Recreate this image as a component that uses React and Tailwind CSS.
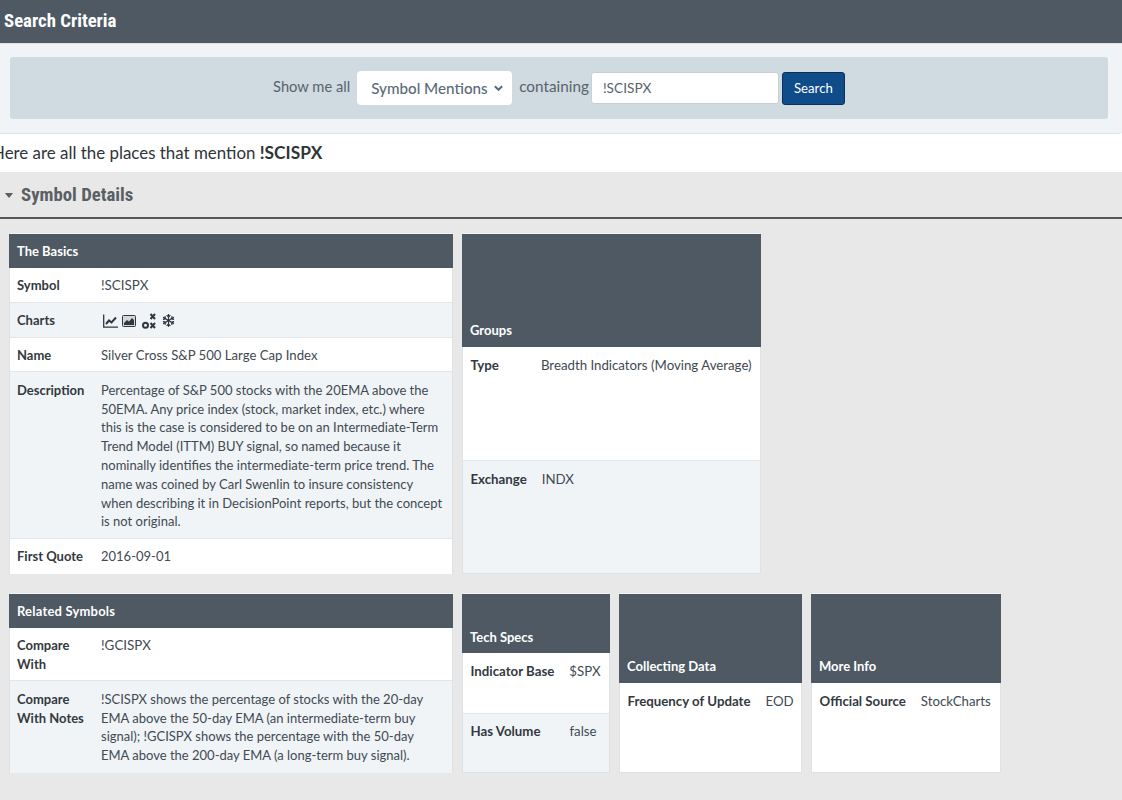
import { FaRegSnowflake } from "react-icons/fa";

const heading = "font-['Roboto_Condensed','Liberation_Sans_Narrow','Roboto',sans-serif] font-bold";

function LineIcon() {
  return (
    <svg viewBox="0 0 15 14" className="h-[14px] w-[15px]" fill="none" stroke="#2f3740">
      <path d="M0.7 0.5 V13.2 H15" strokeWidth="1.3" />
      <path d="M3 10 L6 6.5 L8.5 8.5 L13 3.5" strokeWidth="2" />
    </svg>
  );
}

function AreaIcon() {
  return (
    <svg viewBox="0 0 14 12" className="h-[12px] w-[14px]">
      <rect x="0.5" y="0.5" width="13" height="11" rx="1" fill="#d5d8db" stroke="#2f3740" />
      <path d="M2 10 V8 L5 5 L7 6.5 L10 3 L12 5 V10 Z" fill="#2f3740" />
    </svg>
  );
}

function PnfIcon() {
  return (
    <svg viewBox="0 0 14 16" className="h-[16px] w-[14px]" fill="none" stroke="#2f3740" strokeWidth="2">
      <path d="M8.5 1 L13 6 M13 1 L8.5 6 M8.5 10 L13 15 M13 10 L8.5 15" />
      <circle cx="3.5" cy="12.2" r="2.5" />
    </svg>
  );
}

function Row({ label, alt, children, last }) {
  return (
    <div className={`flex gap-[14px] pl-[7px] pr-[8px] pt-[8.5px] ${last ? "pb-[7.5px]" : "pb-[6.5px] border-b border-[#e2e6e9]"} ${alt ? "bg-[#f0f4f7]" : "bg-white"}`}>
      <div className="w-[70px] shrink-0 font-bold text-[#33393f]">{label}</div>
      <div className="min-w-0 text-[#414a52]">{children}</div>
    </div>
  );
}

function Card({ title, className = "", children, equal }) {
  return (
    <div className={`border border-[#dfe2e4] border-t-[#f4f4f4] ${equal ? "grid auto-rows-fr" : "flex flex-col"} ${className}`}>
      <div className={`-mx-px flex items-end bg-[#4e5964] px-[8px] pb-[7px] pt-[8px] font-bold text-white ${equal ? "min-h-0" : ""}`}>
        {title}
      </div>
      {children}
    </div>
  );
}

function EqRow({ label, value, alt, gap = "gap-[15px]" }) {
  return (
    <div className={`flex min-h-0 ${gap} px-[7.5px] pt-[8.5px] text-[13.25px] whitespace-nowrap ${alt ? "border-t border-[#e2e6e9] bg-[#f0f4f7]" : "bg-white"}`}>
      <div className="shrink-0 font-bold text-[#33393f]">{label}</div>
      <div className="text-[#414a52]">{value}</div>
    </div>
  );
}

export default function App() {
  return (
    <div className="h-[800px] w-[1122px] overflow-hidden bg-white font-['Lato',sans-serif] text-[13px] leading-[18.8px]">
      <header className={`flex h-[43px] items-center bg-[#4e5964] pl-[4px] text-[18.8px] text-white ${heading}`}>
        Search Criteria
      </header>
      <section className="rounded-br-[3px] border-y border-[#dfe3e7] bg-[#f0f4f7] pb-[14px] pl-[10px] pr-[14px] pt-[13px]">
        <form className="flex h-[62px] items-center justify-center rounded-[3px] bg-[#d0dae1] text-[#58636d]">
          <span className="-mt-[3px] text-[14.7px]">Show me all</span>
          <div className="ml-[7px] flex h-[34px] w-[155px] items-center gap-[6px] rounded-[4px] bg-white pl-[14px] text-[15.2px] font-medium text-[#5a6a7a]">
            Symbol Mentions
            <svg viewBox="0 0 10 6" className="h-[6px] w-[9px]" fill="none" stroke="#5a6a7a" strokeWidth="2.2"><path d="M1 1 L5 5 L9 1" /></svg>
          </div>
          <span className="-mt-[3px] ml-[7px] text-[15.3px]">containing</span>
          <div className="ml-[2px] flex h-[32px] w-[188px] items-center rounded-[3px] border border-[#c8d0d6] bg-white px-[11px] text-[13.7px] text-[#58636d]">
            !SCISPX
          </div>
          <button type="button" className="ml-[3px] flex h-[33px] w-[63px] items-center justify-center rounded-[3px] border border-[#0b2f57] bg-[#0f4c8a] text-[13.2px] text-white">
            Search
          </button>
        </form>
      </section>
      <p className="-ml-[8px] flex h-[38px] items-center text-[16.9px] text-[#2f3439]">
        Here are all the places that mention&nbsp;<b className="text-[17.3px]">!SCISPX</b>
      </p>
      <main className="h-[628px] bg-[#e8e8e8]">
        <div className={`flex h-[47px] items-center gap-[7px] border-b-2 border-[#55595d] pl-[4px] pt-[2px] text-[18.8px] text-[#5a5f65] ${heading}`}>
          <svg viewBox="0 0 10 6" className="h-[5px] w-[10px]"><path d="M0 0 H10 L5 6 Z" fill="#5a5f65" /></svg>
          Symbol Details
        </div>
        <div className="mt-[14px] flex h-[341px] items-stretch gap-[9px] pl-[9px]">
          <Card title="The Basics" className="w-[444px]">
            <Row label="Symbol"><span className="text-[13.4px]">!SCISPX</span></Row>
            <Row label="Charts" alt>
              <div className="flex h-[19px] items-center text-[#2f3740]">
                <span className="ml-[2px]"><LineIcon /></span>
                <span className="ml-[4px]"><AreaIcon /></span>
                <span className="ml-[6px]"><PnfIcon /></span>
                <FaRegSnowflake className="ml-[6px] h-[13px] w-[13px]" />
              </div>
            </Row>
            <Row label="Name"><span className="text-[13.15px]">Silver Cross S&amp;P 500 Large Cap Index</span></Row>
            <Row label="Description" alt>
              Percentage of S&amp;P 500 stocks with the 20EMA above the 50EMA. Any price index (stock, market index, etc.) where this is the case is considered to be on an Intermediate-Term Trend Model (ITTM) BUY signal, so named because it nominally identifies the intermediate-term price trend. The name was coined by Carl Swenlin to insure consistency when describing it in DecisionPoint reports, but the concept is not original.
            </Row>
            <Row label="First Quote" last>2016-09-01</Row>
          </Card>
          <Card title="Groups" equal className="w-[299px]">
            <EqRow label="Type" value="Breadth Indicators (Moving Average)" gap="gap-[42px]" />
            <EqRow label="Exchange" value="INDX" alt />
          </Card>
        </div>
        <div className="mt-[19px] flex h-[180px] items-stretch gap-[9px] pl-[9px]">
          <Card title={<span className="tracking-[0.2px]">Related Symbols</span>} className="w-[444px]">
            <Row label="Compare With"><span className="text-[13.4px]">!GCISPX</span></Row>
            <Row label="Compare With Notes" alt last>
              !SCISPX shows the percentage of stocks with the 20-day EMA above the 50-day EMA (an intermediate-term buy signal); !GCISPX shows the percentage with the 50-day EMA above the 200-day EMA (a long-term buy signal).
            </Row>
          </Card>
          <Card title="Tech Specs" equal className="w-[148px]">
            <EqRow label="Indicator Base" value="$SPX" />
            <EqRow label="Has Volume" value="false" alt gap="gap-[29px]" />
          </Card>
          <Card title="Collecting Data" equal className="w-[183px]">
            <EqRow label="Frequency of Update" value="EOD" />
          </Card>
          <Card title="More Info" equal className="w-[190px]">
            <EqRow label="Official Source" value="StockCharts" />
          </Card>
        </div>
      </main>
    </div>
  );
}
